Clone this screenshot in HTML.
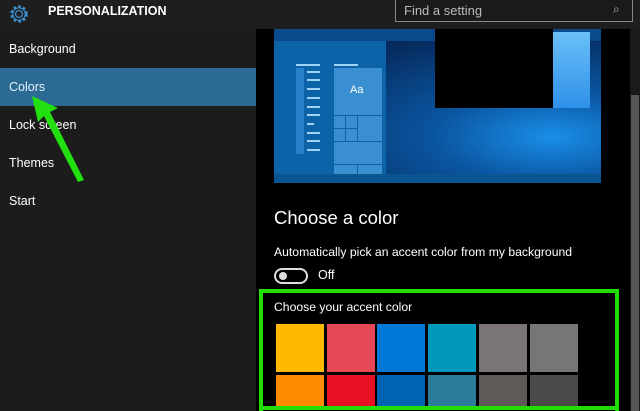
<!DOCTYPE html><html><head><style>
body{margin:0;width:640px;height:411px;overflow:hidden;background:#000;font-family:"Liberation Sans",sans-serif;position:relative}
div{position:absolute;box-sizing:border-box}
.t{color:#fff;font-size:12.5px;white-space:nowrap}
.l{background:#9fd4f5;height:2px}
.sw{width:48px;height:48px}
</style></head><body>
<div style="left:0;top:0;width:640px;height:29px;background:#1e1e1e"></div>
<svg style="position:absolute;left:8px;top:3px" width="22" height="22" viewBox="0 0 22 22"><circle cx="11" cy="11" r="3.5" fill="none" stroke="#3a8fd0" stroke-width="1.3"/><circle cx="11" cy="11" r="7.5" fill="none" stroke="#3a8fd0" stroke-width="2.5" stroke-dasharray="2.6 2.3"/><circle cx="11" cy="11" r="6.2" fill="none" stroke="#3a8fd0" stroke-width="1.2"/></svg>
<div class="t" style="left:48px;top:4px;font-weight:bold;font-size:12.5px">PERSONALIZATION</div>
<div style="left:395px;top:-2px;width:238px;height:24px;border:1px solid #888;background:#1a1a1a"></div>
<div class="t" style="left:404px;top:3px;color:#bbb;font-size:13px">Find a setting</div>
<div class="t" style="left:613px;top:2px;color:#bbb;font-size:12px">⌕</div>
<div style="left:0;top:29px;width:256px;height:382px;background:#1c1c1c"></div>
<div style="left:0;top:68px;width:256px;height:38px;background:#2a6a93"></div>
<div class="t" style="left:9px;top:42px">Background</div>
<div class="t" style="left:9px;top:80px;color:#e8f2fa">Colors</div>
<div class="t" style="left:9px;top:118px">Lock screen</div>
<div class="t" style="left:9px;top:156px">Themes</div>
<div class="t" style="left:9px;top:194px">Start</div>
<svg style="position:absolute;left:28px;top:96px" width="60" height="90"><polygon points="4,0 30,12 22,16 56,84 50,86 16,20 10,26" fill="#22e010"/></svg>
<div style="left:630px;top:29px;width:10px;height:382px;background:#1a1a1a"></div>
<div style="left:631px;top:95px;width:8px;height:316px;background:#555"></div>
<div style="left:274px;top:29px;width:327px;height:154px;background:radial-gradient(ellipse at 85% 70%,#1a8ee8 0%,#0a55a0 30%,#062c60 70%,#04204a 100%)"></div>
<div style="left:274px;top:29px;width:327px;height:12px;background:#0a4a8a"></div>
<div style="left:274px;top:41px;width:112px;height:133px;background:#0d63a8"></div>
<div style="left:274px;top:174px;width:327px;height:9px;background:#0b5590"></div>
<div style="left:435px;top:29px;width:118px;height:79px;background:#000"></div>
<div style="left:553px;top:32px;width:37px;height:76px;background:linear-gradient(#6ac0f8,#2e90e8)"></div>
<div class="l" style="left:296px;top:64px;width:24px"></div>
<div class="l" style="left:334px;top:64px;width:24px"></div>
<div style="left:296px;top:68px;width:8px;height:86px;background:#2a80c8"></div>
<div class="l" style="left:307px;top:71px;width:13px"></div><div class="l" style="left:307px;top:79px;width:13px"></div><div class="l" style="left:307px;top:88px;width:13px"></div><div class="l" style="left:307px;top:97px;width:13px"></div><div class="l" style="left:307px;top:106px;width:13px"></div><div class="l" style="left:307px;top:114px;width:13px"></div><div class="l" style="left:307px;top:123px;width:7px"></div><div class="l" style="left:307px;top:132px;width:13px"></div><div class="l" style="left:307px;top:140px;width:13px"></div><div class="l" style="left:307px;top:149px;width:13px"></div>
<div style="left:334px;top:68px;width:48px;height:106px;background:#3a8fd0"></div>
<div class="t" style="left:350px;top:84px;font-size:11px">Aa</div>
<div style="left:334px;top:115px;width:48px;height:1px;background:#0d63a8"></div>
<div style="left:334px;top:141px;width:48px;height:1px;background:#0d63a8"></div>
<div style="left:345px;top:115px;width:1px;height:26px;background:#0d63a8"></div>
<div style="left:357px;top:115px;width:1px;height:26px;background:#0d63a8"></div>
<div style="left:334px;top:128px;width:24px;height:1px;background:#0d63a8"></div>
<div style="left:334px;top:164px;width:48px;height:1px;background:#0d63a8"></div>
<div style="left:357px;top:164px;width:1px;height:10px;background:#0d63a8"></div>
<div class="t" style="left:274px;top:207px;font-size:18.5px">Choose a color</div>
<div class="t" style="left:274px;top:245px;font-size:12.2px">Automatically pick an accent color from my background</div>
<div style="left:274px;top:268px;width:34px;height:16px;border:2px solid #ddd;border-radius:9px"></div>
<div style="left:279px;top:272px;width:8px;height:8px;border-radius:50%;background:#ddd"></div>
<div class="t" style="left:318px;top:268px;font-size:12.5px">Off</div>
<div style="left:259px;top:289px;width:360px;height:122px;border:4px solid #22dd00;border-bottom:none"></div>
<div style="left:259px;top:406px;width:360px;height:4px;background:#22dd00"></div>
<div class="t" style="left:274px;top:300px;font-size:12.2px">Choose your accent color</div>
<div class="sw" style="left:276px;top:324px;background:#ffb900"></div>
<div class="sw" style="left:327px;top:324px;background:#e74856"></div>
<div class="sw" style="left:377px;top:324px;background:#0078d7"></div>
<div class="sw" style="left:428px;top:324px;background:#0099bc"></div>
<div class="sw" style="left:479px;top:324px;background:#7a7574"></div>
<div class="sw" style="left:530px;top:324px;background:#767676"></div>
<div class="sw" style="left:276px;top:375px;height:31px;background:#ff8c00"></div>
<div class="sw" style="left:327px;top:375px;height:31px;background:#e81123"></div>
<div class="sw" style="left:377px;top:375px;height:31px;background:#0063b1"></div>
<div class="sw" style="left:428px;top:375px;height:31px;background:#2d7d9a"></div>
<div class="sw" style="left:479px;top:375px;height:31px;background:#5d5a58"></div>
<div class="sw" style="left:530px;top:375px;height:31px;background:#4c4a48"></div>
</body></html>
